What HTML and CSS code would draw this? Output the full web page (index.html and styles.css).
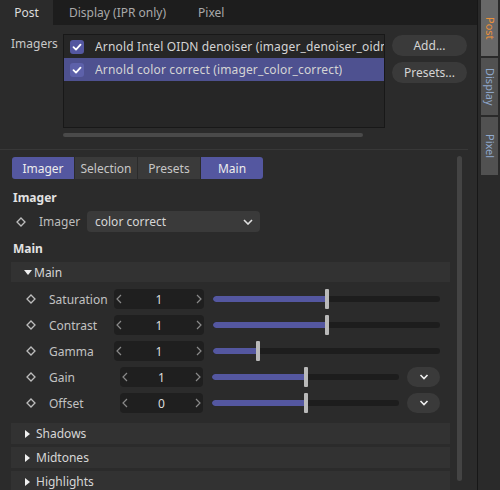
FILE: index.html
```html
<!DOCTYPE html>
<html>
<head>
<meta charset="utf-8">
<link rel="stylesheet" href="styles.css">
</head>
<body>
<div class="app">
  <div class="main">
    <div class="tabbar">
      <div class="tab active">Post</div>
      <div class="tab">Display (IPR only)</div>
      <div class="tab">Pixel</div>
    </div>
    <div class="top">
      <div class="imagers-label">Imagers</div>
      <div class="listcol">
        <div class="list">
          <div class="item">
            <span class="cb"><svg width="14" height="14" viewBox="0 0 14 14"><polyline points="3.5,7.2 6,9.6 10.5,4.6" fill="none" stroke="#fff" stroke-width="1.8" stroke-linecap="round" stroke-linejoin="round"/></svg></span>
            <span class="itext">Arnold Intel OIDN denoiser (imager_denoiser_oidn)</span>
          </div>
          <div class="item sel">
            <span class="cb"><svg width="14" height="14" viewBox="0 0 14 14"><polyline points="3.5,7.2 6,9.6 10.5,4.6" fill="none" stroke="#fff" stroke-width="1.8" stroke-linecap="round" stroke-linejoin="round"/></svg></span>
            <span class="itext">Arnold color correct (imager_color_correct)</span>
          </div>
        </div>
        <div class="hscroll"></div>
      </div>
      <div class="btncol">
        <div class="btn">Add...</div>
        <div class="btn">Presets...</div>
      </div>
    </div>
    <div class="sep"></div>
    <div class="lower">
      <div class="content">
        <div class="subtabs">
          <div class="stb on">Imager</div>
          <div class="stb">Selection</div>
          <div class="stb">Presets</div>
          <div class="stb on last">Main</div>
        </div>
        <div class="heading">Imager</div>
        <div class="imager-row">
          <span class="kf first"><svg width="10" height="10" viewBox="0 0 10 10"><polygon points="5,1 9,5 5,9 1,5" fill="none" stroke="#bdbdbd" stroke-width="1.3"/></svg></span>
          <span class="ilabel">Imager</span>
          <div class="dropdown"><span>color correct</span><svg width="10" height="6" viewBox="0 0 10 6"><polyline points="1,1 5,5 9,1" fill="none" stroke="#e0e0e0" stroke-width="1.6"/></svg></div>
        </div>
        <div class="heading h2">Main</div>
        <div class="group open"><span class="tri-down"></span><span>Main</span></div>
        <div class="params">
          <div class="row">
            <span class="kf"><svg width="10" height="10" viewBox="0 0 10 10"><polygon points="5,1 9,5 5,9 1,5" fill="none" stroke="#bdbdbd" stroke-width="1.3"/></svg></span>
            <span class="plabel">Saturation</span>
            <div class="num"><svg width="6" height="10" viewBox="0 0 6 10"><polyline points="5,1 1,5 5,9" fill="none" stroke="#8a8a8a" stroke-width="1.2"/></svg><span>1</span><svg width="6" height="10" viewBox="0 0 6 10"><polyline points="1,1 5,5 1,9" fill="none" stroke="#8a8a8a" stroke-width="1.2"/></svg></div>
            <div class="slider"><div class="track"><div class="fill" style="width:50%"></div></div><div class="handle" style="left:50%"></div></div>
          </div>
          <div class="row">
            <span class="kf"><svg width="10" height="10" viewBox="0 0 10 10"><polygon points="5,1 9,5 5,9 1,5" fill="none" stroke="#bdbdbd" stroke-width="1.3"/></svg></span>
            <span class="plabel">Contrast</span>
            <div class="num"><svg width="6" height="10" viewBox="0 0 6 10"><polyline points="5,1 1,5 5,9" fill="none" stroke="#8a8a8a" stroke-width="1.2"/></svg><span>1</span><svg width="6" height="10" viewBox="0 0 6 10"><polyline points="1,1 5,5 1,9" fill="none" stroke="#8a8a8a" stroke-width="1.2"/></svg></div>
            <div class="slider"><div class="track"><div class="fill" style="width:50%"></div></div><div class="handle" style="left:50%"></div></div>
          </div>
          <div class="row">
            <span class="kf"><svg width="10" height="10" viewBox="0 0 10 10"><polygon points="5,1 9,5 5,9 1,5" fill="none" stroke="#bdbdbd" stroke-width="1.3"/></svg></span>
            <span class="plabel">Gamma</span>
            <div class="num"><svg width="6" height="10" viewBox="0 0 6 10"><polyline points="5,1 1,5 5,9" fill="none" stroke="#8a8a8a" stroke-width="1.2"/></svg><span>1</span><svg width="6" height="10" viewBox="0 0 6 10"><polyline points="1,1 5,5 1,9" fill="none" stroke="#8a8a8a" stroke-width="1.2"/></svg></div>
            <div class="slider"><div class="track"><div class="fill" style="width:20%"></div></div><div class="handle" style="left:20%"></div></div>
          </div>
          <div class="row short">
            <span class="kf"><svg width="10" height="10" viewBox="0 0 10 10"><polygon points="5,1 9,5 5,9 1,5" fill="none" stroke="#bdbdbd" stroke-width="1.3"/></svg></span>
            <span class="plabel">Gain</span>
            <div class="num"><svg width="6" height="10" viewBox="0 0 6 10"><polyline points="5,1 1,5 5,9" fill="none" stroke="#8a8a8a" stroke-width="1.2"/></svg><span>1</span><svg width="6" height="10" viewBox="0 0 6 10"><polyline points="1,1 5,5 1,9" fill="none" stroke="#8a8a8a" stroke-width="1.2"/></svg></div>
            <div class="slider"><div class="track"><div class="fill" style="width:50%"></div></div><div class="handle" style="left:50%"></div></div>
            <div class="rbtn"><svg width="10" height="6" viewBox="0 0 10 6"><polyline points="1.5,1 5,4.5 8.5,1" fill="none" stroke="#f0f0f0" stroke-width="1.6"/></svg></div>
          </div>
          <div class="row short">
            <span class="kf"><svg width="10" height="10" viewBox="0 0 10 10"><polygon points="5,1 9,5 5,9 1,5" fill="none" stroke="#bdbdbd" stroke-width="1.3"/></svg></span>
            <span class="plabel">Offset</span>
            <div class="num"><svg width="6" height="10" viewBox="0 0 6 10"><polyline points="5,1 1,5 5,9" fill="none" stroke="#8a8a8a" stroke-width="1.2"/></svg><span>0</span><svg width="6" height="10" viewBox="0 0 6 10"><polyline points="1,1 5,5 1,9" fill="none" stroke="#8a8a8a" stroke-width="1.2"/></svg></div>
            <div class="slider"><div class="track"><div class="fill" style="width:50%"></div></div><div class="handle" style="left:50%"></div></div>
            <div class="rbtn"><svg width="10" height="6" viewBox="0 0 10 6"><polyline points="1.5,1 5,4.5 8.5,1" fill="none" stroke="#f0f0f0" stroke-width="1.6"/></svg></div>
          </div>
        </div>
        <div class="group first-closed"><span class="tri-right"></span><span>Shadows</span></div>
        <div class="group"><span class="tri-right"></span><span>Midtones</span></div>
        <div class="group"><span class="tri-right"></span><span>Highlights</span></div>
      </div>
      <div class="vscroll"></div>
    </div>
  </div>
  <div class="divider"></div>
  <div class="side">
    <div class="stab on s1">Post</div>
    <div class="stab s2">Display</div>
    <div class="stab s3">Pixel</div>
  </div>
</div>
</body>
</html>
```
FILE: styles.css
```css
* { box-sizing: border-box; margin: 0; padding: 0; }
html, body { width: 500px; height: 490px; overflow: hidden; background: #2b2b2b; }
body {
  font-family: "Noto Sans", "Segoe UI", "Liberation Sans", sans-serif;
  font-size: 12px;
  line-height: 16px;
  color: #cfcfcf;
}
.app { display: flex; width: 500px; height: 490px; }
.main { width: 477px; display: flex; flex-direction: column; background: #2b2b2b; }

.tabbar { height: 25px; background: #1d1d1d; display: flex; flex: none; }
.tab { padding: 0 16px; line-height: 25px; color: #a9a9a9; }
.tab.active { width: 53px; padding: 0; text-align: center; background: #2b2b2b; color: #dcdcdc; }

.top { height: 124px; display: flex; padding-top: 9px; flex: none; }
.imagers-label { width: 63px; padding-left: 11px; line-height: 20px; color: #c8c8c8; }
.listcol { width: 322px; }
.list { height: 94px; border: 1px solid #181818; background: #262626; overflow: hidden; }
.item { height: 23px; display: flex; align-items: center; white-space: nowrap; color: #d4d4d4; }
.item.sel { background: #4e5190; }
.cb { width: 14px; height: 14px; border-radius: 3px; background: #5457a0; margin-left: 6px; margin-right: 11px; display: flex; flex: none; }
.item.sel .cb { background: #5d61aa; }
.itext { overflow: hidden; letter-spacing: 0.15px; padding-top: 1px; }
.hscroll { width: 300px; height: 4px; border-radius: 2px; background: #4a4a4a; margin-top: 5px; }
.btncol { margin-left: 7px; width: 75px; padding-top: 1px; display: flex; flex-direction: column; gap: 6px; }
.btn { height: 21px; border-radius: 11px; background: #3a3a3a; text-align: center; line-height: 21px; color: #d4d4d4; }

.sep { height: 1px; background: #383838; width: 468px; flex: none; }

.lower { flex: 1; display: flex; min-height: 0; overflow: hidden; }
.content { width: 450px; padding-left: 11px; padding-top: 7px; flex: none; }
.vscroll { width: 5px; margin-left: 7px; margin-top: 6px; height: 325px; border-radius: 3px; background: #444; flex: none; }

.subtabs { display: flex; gap: 1px; margin-left: 1px; height: 22px; }
.stb { width: 62px; height: 22px; line-height: 23px; text-align: center; background: #3a3a3a; color: #c6c6c6; }
.stb.on { background: #5457a0; color: #ececec; }
.stb:first-child { border-radius: 3px 0 0 3px; }
.stb.last { border-radius: 0 3px 3px 0; }

.heading { margin-top: 8px; height: 20px; line-height: 22px; font-weight: bold; color: #e2e2e2; padding-left: 2px; }
.heading.h2 { margin-top: 6px; }

.imager-row { margin-top: 4px; height: 21px; display: flex; align-items: center; }
.kf { width: 20px; height: 10px; display: flex; justify-content: center; margin-left: 10px; margin-right: 8px; flex: none; }
.kf.first { margin-left: 0; }
.ilabel { width: 48px; color: #bdbdbd; padding-top: 1px; }
.dropdown { width: 173px; height: 21px; background: #3a3a3a; border-radius: 4px; display: flex; align-items: center; justify-content: space-between; padding: 1px 7px 0 8px; color: #d6d6d6; }

.group { height: 21px; margin-top: 3px; width: 439px; background: #323232; display: flex; align-items: center; color: #d6d6d6; }
.group span:last-child { padding-top: 1px; }
.group.open { height: 20px; margin-top: 4px; }
.group.first-closed { margin-top: 7px; }
.tri-down { width: 0; height: 0; border-left: 4px solid transparent; border-right: 4px solid transparent; border-top: 5px solid #f0f0f0; margin-left: 13px; margin-right: 2px; }
.tri-right { width: 0; height: 0; border-top: 4px solid transparent; border-bottom: 4px solid transparent; border-left: 5px solid #f0f0f0; margin-left: 14px; margin-right: 6px; }

.params { margin-top: 4px; padding-right: 10px; }
.row { height: 26px; display: flex; align-items: center; }
.plabel { width: 65px; color: #c2c2c2; padding-top: 1px; }
.row.short .plabel { width: 71px; }
.num { width: 90px; height: 20px; background: #1f1f1f; border-radius: 4px; display: flex; align-items: center; justify-content: space-between; padding: 0 2px; color: #dcdcdc; flex: none; }
.num span { padding-top: 1px; }
.row.short .num { width: 83px; }
.slider { margin-left: 9px; flex: 1; height: 20px; position: relative; display: flex; align-items: center; }
.row.short .slider { flex: none; width: 187px; }
.track { width: 100%; height: 6px; background: #1d1d1d; border-radius: 3px; overflow: hidden; }
.fill { height: 100%; background: #5457a0; border-radius: 3px 0 0 3px; }
.handle { position: absolute; top: 0; width: 4px; height: 20px; margin-left: -2px; background: #b9b9b9; border-radius: 1px; }
.rbtn { margin-left: 8px; width: 33px; height: 20px; border-radius: 10px; background: #3a3a3a; display: flex; align-items: center; justify-content: center; flex: none; }

.divider { width: 1px; background: #171717; }
.side { width: 22px; background: #2a2a2a; padding-left: 3px; display: flex; flex-direction: column; gap: 2px; }
.stab { width: 17px; writing-mode: vertical-rl; display: flex; align-items: center; justify-content: center; font-size: 11px; background: #515151; color: #8fa8cc; }
.stab.on { background: #686868; color: #eb913a; }
.s1 { height: 56px; }
.s2 { height: 57px; }
.s3 { height: 58px; }
```
